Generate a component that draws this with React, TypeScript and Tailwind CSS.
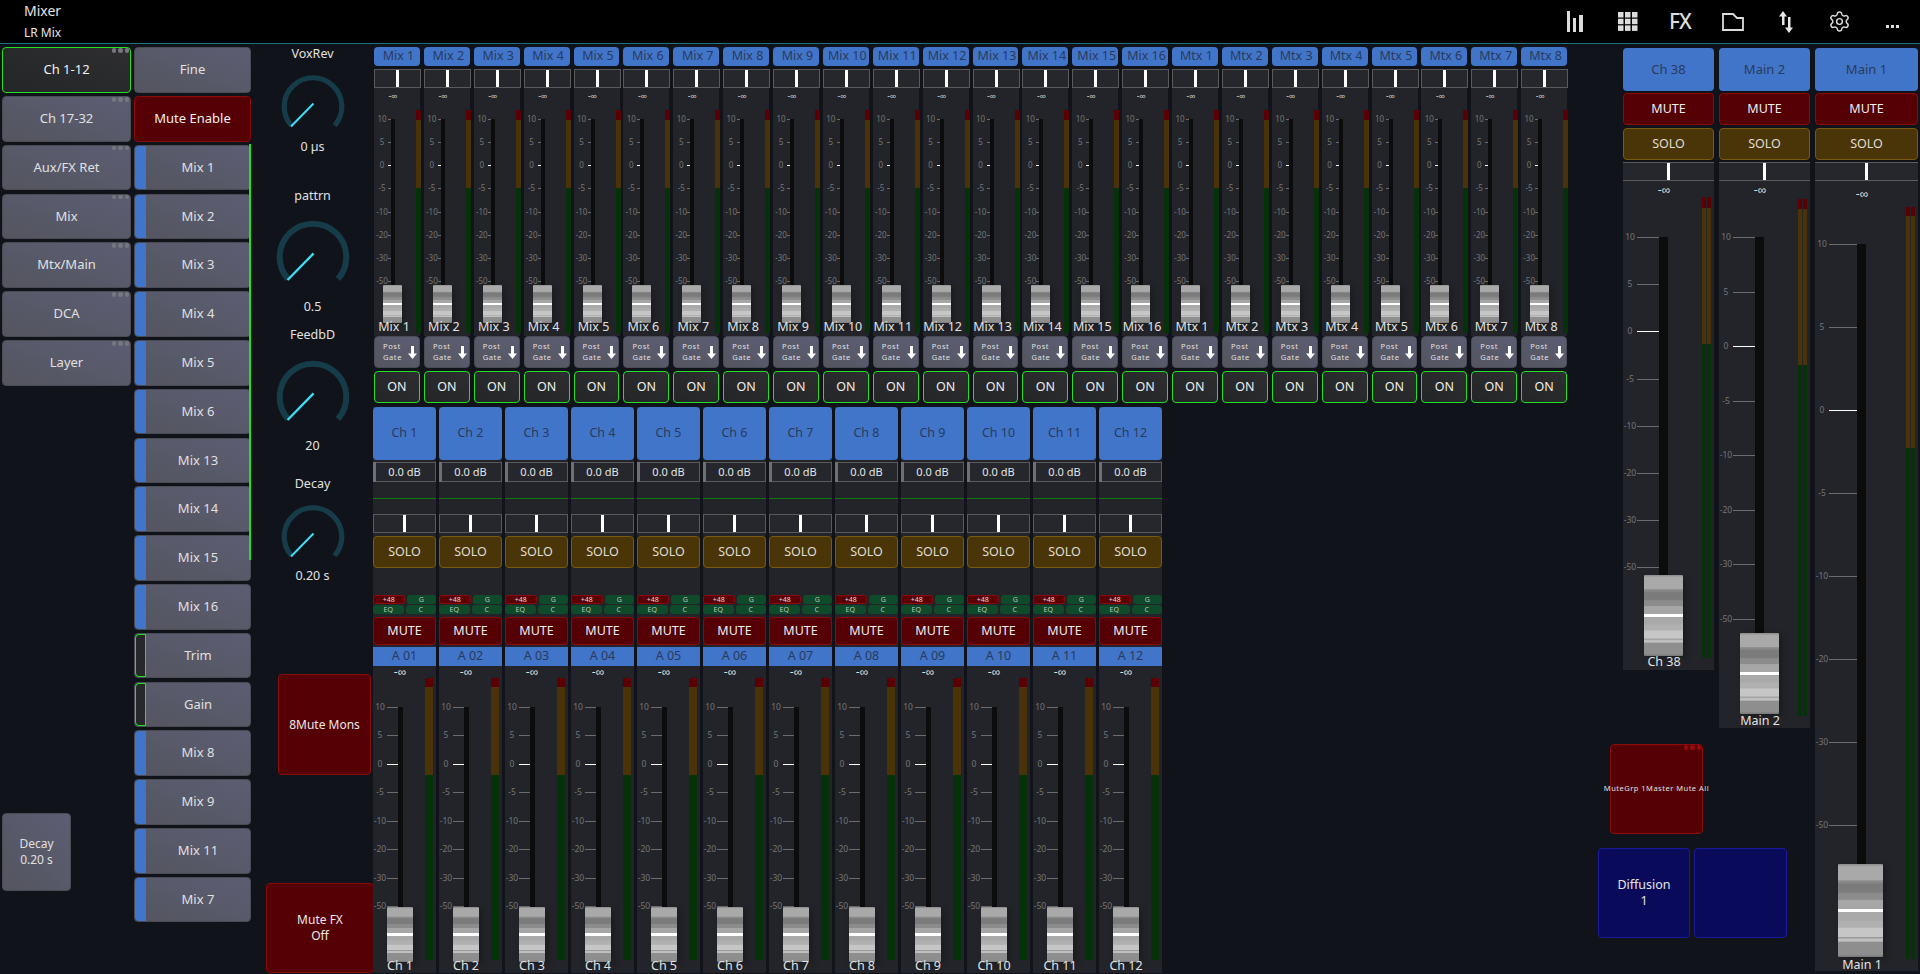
import { Settings } from "lucide-react";

const CAP =
  "bg-[linear-gradient(180deg,#8a8a8a_0%,#a9a9a9_3%,#a9a9a9_17%,#8e8e8e_18%,#7b7b7b_22%,#7b7b7b_30%,#8c8c8c_32%,#8c8c8c_38%,#a6a6a6_39%,#a6a6a6_48%,#ffffff_48%,#ffffff_52%,#a9a9a9_52%,#a9a9a9_60%,#b0b0b0_62%,#b0b0b0_68%,#c6c6c6_69%,#c6c6c6_78%,#999999_79%,#c0c0c0_81%,#c0c0c0_83%,#8e8e8e_84%,#8e8e8e_97%,#777777_100%)]";

const SCALE = ["10", "5", "0", "-5", "-10", "-20", "-30", "-50"];

interface FaderProps {
  label: string;
  w: number;
  h: number;
  infY: number;
  infX: number;
  meterX: number;
  meterTop: number;
  red: number;
  orange: number;
  green: number;
  barW: number;
  bars: number;
  trackX: number;
  trackW: number;
  trackTop: number;
  trackH: number;
  spacing: number;
  tickX: number;
  capX: number;
  capW: number;
  capH: number;
  labelY: number;
  labelX: number;
  small?: boolean;
}

const Fader = (f: FaderProps) => {
  return (
    <div className="relative bg-[#222429] shrink-0" style={{ width: f.w, height: f.h }}>
      <span
        className={`absolute -translate-x-1/2 -translate-y-1/2 leading-none text-[#ddd] ${f.small ? "text-[8.5px]" : "text-[12px]"}`}
        style={{ left: f.infX, top: f.infY }}
      >
        -∞
      </span>
      {/* meter */}
      <div className="absolute flex gap-[0.7px]" style={{ left: f.meterX, top: f.meterTop }}>
        {Array.from({ length: f.bars }).map((_, i) => (
          <div key={i} className="flex flex-col" style={{ width: f.barW }}>
            <div className="bg-[#5a0004]" style={{ height: f.red }} />
            <div className="bg-[#4a3306]" style={{ height: f.orange }} />
            <div className="bg-[#053208]" style={{ height: f.green }} />
          </div>
        ))}
      </div>
      {/* scale */}
      {SCALE.map((s, i) => (
        <div key={s} className="absolute left-0 h-0" style={{ top: f.trackTop + i * f.spacing }}>
          <span
            className={`absolute -translate-x-1/2 -translate-y-1/2 leading-none text-[#767676] ${f.small ? "left-[8px] text-[8px]" : "left-[7px] text-[8.5px]"}`}
          >
            {s}
          </span>
          <div
            className={`absolute h-px ${s === "0" ? "bg-white" : "bg-[#6c6c6c]"}`}
            style={{ left: f.tickX, width: f.trackX - f.tickX }}
          />
        </div>
      ))}
      {/* track */}
      <div
        className="absolute bg-[#0c0c0c]"
        style={{ left: f.trackX, top: f.trackTop, width: f.trackW, height: f.trackH }}
      />
      {/* cap */}
      <div
        className={`absolute rounded-[1px] shadow-[3px_2px_6px_rgba(0,0,0,0.25)] ${CAP}`}
        style={{ left: f.capX, top: f.trackTop + f.trackH, width: f.capW, height: f.capH }}
      />
      <span
        className="absolute -translate-x-1/2 -translate-y-1/2 whitespace-nowrap text-[12.5px] leading-none text-[#e2e2e2]"
        style={{ left: f.labelX, top: f.labelY }}
      >
        {f.label}
      </span>
    </div>
  );
};

const Pan = ({ sides = true }: { sides?: boolean }) => (
  <div
    className={`flex justify-center h-[19px] bg-[#25272c] border-[#5a5a5a] ${sides ? "border" : "border-y"}`}
  >
    <div className="w-[3px] bg-white" />
  </div>
);

const Dots = ({ red }: { red?: boolean }) => (
  <div className="absolute top-0 right-[1px] flex gap-[2px]">
    <div className={`w-[4.5px] h-[4.5px] rounded-full ${red ? "bg-[#980a0a]" : "bg-[#76777f]"}`} />
    <div className={`w-[4.5px] h-[4.5px] rounded-full ${red ? "bg-[#980a0a]" : "bg-[#76777f]"}`} />
    <div className={`w-[4.5px] h-[4.5px] rounded-full ${red ? "bg-[#980a0a]" : "bg-[#76777f]"}`} />
  </div>
);

const GREY_BTN =
  "bg-linear-to-tr from-[#54555f] to-[#5c5d73] border border-[#4a4b55] rounded-[4px] text-[#e0e0e0]";

const NavButton = ({ label, active }: { label: string; active?: boolean }) => (
  <div
    className={`relative flex items-center justify-center h-[45.5px] text-[13px] rounded-[4px] ${
      active
        ? "bg-linear-to-tr from-[#242628] to-[#2e2e30] border border-[#22e022] text-[#f0f0f0]"
        : GREY_BTN
    }`}
  >
    {label}
    <Dots />
  </div>
);

const MixRow = ({ label, trim }: { label: string; trim?: boolean }) => (
  <div className={`flex h-[45.5px] text-[13px] overflow-hidden ${GREY_BTN}`}>
    <div
      className={`w-[11px] shrink-0 rounded-l-[4px] ${
        trim ? "bg-[#26282a] border border-[#22e022]" : "bg-[#4175c9]"
      }`}
    />
    <div className="flex-1 flex items-center justify-center">{label}</div>
  </div>
);

const Knob = ({ size }: { size: number }) => (
  <svg width={size} height={size} viewBox="0 0 64 64" className="shrink-0">
    <path d="M10.4 53.6 A28.8 28.8 0 1 1 53.6 53.6" fill="none" stroke="#153c48" strokeWidth="5.2" />
    <line x1="32.5" y1="31.5" x2="10" y2="54.5" stroke="#41dcf4" strokeWidth="2" />
  </svg>
);

const MIX_NAMES = [
  "Mix 1", "Mix 2", "Mix 3", "Mix 4", "Mix 5", "Mix 6", "Mix 7", "Mix 8",
  "Mix 9", "Mix 10", "Mix 11", "Mix 12", "Mix 13", "Mix 14", "Mix 15", "Mix 16",
  "Mtx 1", "Mtx 2", "Mtx 3", "Mtx 4", "Mtx 5", "Mtx 6", "Mtx 7", "Mtx 8",
];

const MixStrip = ({ name }: { name: string }) => (
  <div className="flex flex-col min-w-0">
    <div className="flex items-center justify-center h-[19px] bg-[#4175c9] rounded-[4px] text-[12.5px] text-[#2a3a5c] pl-[3px]">
      {name}
    </div>
    <div className="mt-[3px] w-[47px]">
      <Pan />
    </div>
    <Fader
      label={name}
      w={46}
      h={248}
      infX={19}
      infY={8}
      meterX={42}
      meterTop={22}
      red={10}
      orange={68}
      green={145}
      barW={5}
      bars={1}
      trackX={17}
      trackW={4}
      trackTop={31}
      trackH={166}
      spacing={23.14}
      tickX={14}
      capX={9}
      capW={19}
      capH={38}
      labelX={20}
      labelY={239}
      small
    />
    <div className={`flex items-center justify-between h-[32px] pl-[8px] pr-[2px] text-[7.5px] tracking-[0.6px] leading-[11px] ${GREY_BTN}`}>
      <div>
        Post
        <br />
        Gate
      </div>
      <svg width="9" height="13" viewBox="0 0 9 13" fill="white" className="shrink-0">
        <path d="M3 0H6V7.5H9L4.5 13L0 7.5H3Z" />
      </svg>
    </div>
    <div className="mt-[3px] flex items-center justify-center h-[32px] bg-linear-to-tr from-[#232527] to-[#2e2e30] border border-[#22e022] rounded-[4px] text-[12.5px] text-[#eee]">
      ON
    </div>
  </div>
);

const Pill = ({ text, red }: { text: string; red?: boolean }) => (
  <div
    className={`flex-1 flex items-center justify-center h-[9px] rounded-[3px] text-[7px] leading-none ${
      red ? "bg-[#5a0004] border border-[#8c0a0a] text-[#ddd]" : "bg-[#0f4a2a] text-[#b8c8c0]"
    }`}
  >
    {text}
  </div>
);

const ChStrip = ({ n }: { n: number }) => (
  <div className="flex flex-col bg-[#222429] min-w-0">
    <div className="flex items-center justify-center h-[53px] bg-[#4175c9] rounded-[4px] text-[12.5px] text-[#2a3a5c]">
      Ch {n}
    </div>
    <div className="mt-[2px] relative flex items-center justify-center h-[20px] bg-[#25272c] border border-[#5a5a5a] text-[11px] text-[#e4e4e4]">
      <div className="absolute left-[-1px] top-[-1px] bottom-[-1px] w-[3px] bg-[#6e7078]" />
      0.0 dB
    </div>
    <div className="flex items-center h-[32px]">
      <div className="w-full h-px bg-[#0e7a0e]" />
    </div>
    <Pan />
    <div className="mt-[3px] flex items-center justify-center h-[32px] bg-[#4a3508] border border-[#7a5a10] rounded-[4px] text-[12.5px] text-[#e0dcd0]">
      SOLO
    </div>
    <div className="mt-[27px] flex gap-[2px]">
      <Pill text="+48" red />
      <Pill text="G" />
    </div>
    <div className="mt-px flex gap-[2px]">
      <Pill text="EQ" />
      <Pill text="C" />
    </div>
    <div className="mt-[3px] flex items-center justify-center h-[28px] bg-[#550004] border border-[#8c0a0a] rounded-[4px] text-[12.5px] text-[#eee]">
      MUTE
    </div>
    <div className="mt-[2px] flex items-center justify-center h-[19px] bg-[#4175c9] text-[12.5px] text-[#2a3a5c]">
      A {String(n).padStart(2, "0")}
    </div>
    <Fader
      label={`Ch ${n}`}
      w={63}
      h={307}
      infX={27}
      infY={6}
      meterX={52}
      meterTop={12}
      red={9}
      orange={88}
      green={185}
      barW={3.6}
      bars={2}
      trackX={25}
      trackW={5}
      trackTop={41}
      trackH={200}
      spacing={28.43}
      tickX={14}
      capX={14}
      capW={26}
      capH={55}
      labelX={27}
      labelY={300}
    />
  </div>
);

const MainHead = ({ name }: { name: string }) => (
  <>
    <div className="flex items-center justify-center h-[43px] bg-[#4175c9] rounded-[4px] text-[13px] text-[#2a3a5c]">
      {name}
    </div>
    <div className="mt-[2px] flex items-center justify-center h-[32px] bg-[#550004] border border-[#8c0a0a] rounded-[4px] text-[12.5px] text-[#eee]">
      MUTE
    </div>
    <div className="mt-[3px] flex items-center justify-center h-[32px] bg-[#4a3508] border border-[#7a5a10] rounded-[4px] text-[12.5px] text-[#e0dcd0]">
      SOLO
    </div>
    <div className="mt-[2px]">
      <Pan sides={false} />
    </div>
  </>
);

export default function App() {
  return (
    <div className="w-[1920px] h-[974px] overflow-hidden flex flex-col bg-[#10141a] font-['Noto_Sans',sans-serif]">
      {/* top bar */}
      <div className="flex items-center h-[44px] shrink-0 bg-black border-b border-[#17727f] text-[#e4e4e4]">
        <div className="ml-[24px] flex flex-col w-[100px]">
          <span className="text-[14px] leading-[22px]">Mixer</span>
          <span className="text-[12px] leading-[22px]">LR Mix</span>
        </div>
        <svg width="16" height="21" viewBox="0 0 16 21" fill="#dcdcdc" className="ml-[1443px] shrink-0">
          <rect x="0" y="0" width="3" height="21" />
          <rect x="6" y="7" width="3" height="14" />
          <rect x="12" y="4" width="4" height="17" />
        </svg>
        <svg width="20" height="19" viewBox="0 0 20 19" fill="#dcdcdc" className="ml-[35px] shrink-0">
          <rect x="0" y="0" width="5.5" height="5.5" />
          <rect x="7" y="0" width="5.5" height="5.5" />
          <rect x="14" y="0" width="5.5" height="5.5" />
          <rect x="0" y="6.7" width="5.5" height="5.5" />
          <rect x="7" y="6.7" width="5.5" height="5.5" />
          <rect x="14" y="6.7" width="5.5" height="5.5" />
          <rect x="0" y="13.4" width="5.5" height="5.5" />
          <rect x="7" y="13.4" width="5.5" height="5.5" />
          <rect x="14" y="13.4" width="5.5" height="5.5" />
        </svg>
        <span className="ml-[31px] w-[24px] text-[21px] font-medium tracking-[-1px] leading-none text-[#dcdcdc]">FX</span>
        <svg width="22" height="18" viewBox="0 0 22 18" fill="none" stroke="#dcdcdc" strokeWidth="1.8" className="ml-[29px] shrink-0">
          <path d="M1 1H11L15 5H21V17H1Z" />
        </svg>
        <svg width="14" height="22" viewBox="0 0 14 22" fill="#e8e8e8" className="ml-[35px] shrink-0">
          <path d="M4 0L8 5.5H5.5V14H3V5.5H0Z" />
          <path d="M10 22L14 16.5H11.5V6H9V16.5H6Z" />
        </svg>
        <Settings size={23} strokeWidth={1.5} color="#dcdcdc" className="ml-[35px] shrink-0" />
        <div className="ml-[35px] mt-[10px] flex gap-[2.5px]">
          <div className="w-[2.5px] h-[2.5px] bg-[#dcdcdc]" />
          <div className="w-[2.5px] h-[2.5px] bg-[#dcdcdc]" />
          <div className="w-[2.5px] h-[2.5px] bg-[#dcdcdc]" />
        </div>
      </div>

      <div className="flex flex-1 min-h-0">
        {/* layer banks */}
        <div className="ml-[2px] w-[129px] shrink-0 pt-[3.3px] flex flex-col gap-[3.3px]">
          <NavButton label="Ch 1-12" active />
          <NavButton label="Ch 17-32" />
          <NavButton label="Aux/FX Ret" />
          <NavButton label="Mix" />
          <NavButton label="Mtx/Main" />
          <NavButton label="DCA" />
          <NavButton label="Layer" />
          <div className={`mt-[424px] w-[69px] h-[78px] flex items-center justify-center text-center text-[12px] leading-[16px] ${GREY_BTN}`}>
            Decay
            <br />
            0.20 s
          </div>
        </div>

        {/* bus list */}
        <div className="relative ml-[3px] w-[117px] shrink-0 pt-[3.3px] flex flex-col gap-[3.3px]">
          <div className={`flex items-center justify-center h-[45.5px] text-[13px] ${GREY_BTN}`}>Fine</div>
          <div className="flex items-center justify-center h-[45.5px] text-[13px] rounded-[4px] bg-[#550004] border border-[#8c0a0a] text-[#eee]">
            Mute Enable
          </div>
          {["Mix 1", "Mix 2", "Mix 3", "Mix 4", "Mix 5", "Mix 6", "Mix 13", "Mix 14", "Mix 15", "Mix 16"].map((m) => (
            <MixRow key={m} label={m} />
          ))}
          <MixRow label="Trim" trim />
          <MixRow label="Gain" trim />
          {["Mix 8", "Mix 9", "Mix 11", "Mix 7"].map((m) => (
            <MixRow key={m} label={m} />
          ))}
          <div className="absolute right-0 top-[100px] w-[2px] h-[416px] bg-[#22e022]" />
        </div>

        {/* fx knobs */}
        <div className="w-[123px] shrink-0 flex flex-col items-center text-[12.5px] text-[#e0e0e0] leading-[20px]">
          <span>VoxRev</span>
          <div className="mt-[8px]">
            <Knob size={64} />
          </div>
          <span className="mt-px">0 µs</span>
          <span className="mt-[29px]">pattrn</span>
          <div className="mt-[11px]">
            <Knob size={74} />
          </div>
          <span className="mt-[6px]">0.5</span>
          <span className="mt-[8px]">FeedbD</span>
          <div className="mt-[12px]">
            <Knob size={74} />
          </div>
          <span className="mt-[5px]">20</span>
          <span className="mt-[18px]">Decay</span>
          <div className="mt-[8px]">
            <Knob size={64} />
          </div>
          <span>0.20 s</span>
          <div className="self-start ml-[27px] mt-[88px] w-[93px] h-[101px] flex items-center justify-center bg-[#550004] border border-[#8c0a0a] rounded-[4px] text-[12px] text-[#e8e8e8]">
            8Mute Mons
          </div>
          <div className="self-start ml-[15px] mt-[108px] w-[108px] h-[90px] flex items-center justify-center text-center bg-[#550004] border border-[#8c0a0a] rounded-[4px] text-[12px] leading-[16px] text-[#e8e8e8]">
            Mute FX
            <br />
            Off
          </div>
        </div>

        {/* strips */}
        <div className="w-[1193px] shrink-0 pt-[3px] flex flex-col">
          <div className="grid grid-cols-[repeat(24,1fr)] gap-x-[4px]">
            {MIX_NAMES.map((n, i) => (
              <MixStrip key={i} name={n} />
            ))}
          </div>
          <div className="mt-[4px] w-[789px] -ml-[1px] grid grid-cols-[repeat(12,1fr)] gap-x-[3px]">
            {Array.from({ length: 12 }).map((_, i) => (
              <ChStrip key={i} n={i + 1} />
            ))}
          </div>
        </div>

        {/* main strips */}
        <div className="flex-1 min-w-0 flex">
          <div className="ml-[31px] w-[212px] shrink-0 pt-[4px] flex flex-col">
            <div className="ml-[25px] flex gap-[5px] items-start">
              <div className="w-[91px] flex flex-col">
                <MainHead name="Ch 38" />
                <Fader
                  label="Ch 38"
                  w={91}
                  h={489}
                  infX={41}
                  infY={9}
                  meterX={79}
                  meterTop={16}
                  red={11}
                  orange={136}
                  green={314}
                  barW={4.4}
                  bars={2}
                  trackX={36}
                  trackW={9}
                  trackTop={56}
                  trackH={338}
                  spacing={47.2}
                  tickX={14}
                  capX={21}
                  capW={39}
                  capH={81}
                  labelX={41}
                  labelY={481}
                />
              </div>
              <div className="w-[91px] flex flex-col">
                <MainHead name="Main 2" />
                <Fader
                  label="Main 2"
                  w={91}
                  h={547}
                  infX={41}
                  infY={9}
                  meterX={79}
                  meterTop={18}
                  red={10}
                  orange={156}
                  green={351}
                  barW={4.4}
                  bars={2}
                  trackX={36}
                  trackW={9}
                  trackTop={56}
                  trackH={396}
                  spacing={54.57}
                  tickX={14}
                  capX={21}
                  capW={39}
                  capH={81}
                  labelX={41}
                  labelY={540}
                />
              </div>
            </div>
            <div className="relative ml-[12px] mt-[16px] w-[93px] h-[90px] flex items-center justify-center bg-[#550004] border border-[#8c0a0a] rounded-[4px] text-[7.5px] tracking-[0.5px] whitespace-nowrap text-[#e0e0e0]">
              MuteGrp 1Master Mute All
              <Dots red />
            </div>
            <div className="mt-[14px] flex gap-[4px]">
              <div className="w-[92px] h-[90px] flex items-center justify-center text-center bg-[#0a0a5a] border border-[#1a1a9c] rounded-[4px] text-[12.5px] leading-[16px] text-[#e4e4e4]">
                Diffusion
                <br />1
              </div>
              <div className="w-[93px] h-[90px] bg-[#0a0a5a] border border-[#1a1a9c] rounded-[4px]" />
            </div>
          </div>
          <div className="ml-[5px] w-[103px] shrink-0 pt-[4px] flex flex-col">
            <MainHead name="Main 1" />
            <Fader
              label="Main 1"
              w={103}
              h={790}
              infX={47}
              infY={13}
              meterX={91}
              meterTop={26}
              red={9}
              orange={232}
              green={511}
              barW={4.4}
              bars={2}
              trackX={42}
              trackW={9}
              trackTop={63}
              trackH={620}
              spacing={83}
              tickX={14}
              capX={23}
              capW={45}
              capH={93}
              labelX={47}
              labelY={784}
            />
          </div>
        </div>
      </div>
    </div>
  );
}
